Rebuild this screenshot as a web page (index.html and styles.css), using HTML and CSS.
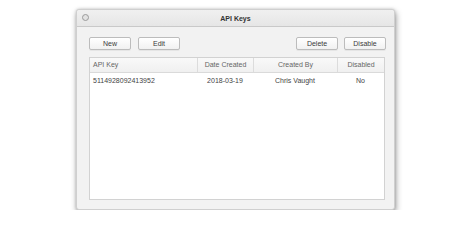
FILE: index.html
```html
<!DOCTYPE html>
<html>
<head>
<meta charset="utf-8">
<link rel="stylesheet" href="styles.css">
</head>
<body>
<div class="window">
  <div class="titlebar">
    <span class="close"></span>
    <span class="title">API Keys</span>
  </div>
  <div class="content">
    <div class="toolbar">
      <div class="group">
        <button class="btn">New</button>
        <button class="btn">Edit</button>
      </div>
      <div class="group group-right">
        <button class="btn">Delete</button>
        <button class="btn">Disable</button>
      </div>
    </div>
    <div class="table">
      <div class="row head">
        <div class="cell left">API Key</div>
        <div class="cell">Date Created</div>
        <div class="cell">Created By</div>
        <div class="cell">Disabled</div>
      </div>
      <div class="row">
        <div class="cell left">5114928092413952</div>
        <div class="cell">2018-03-19</div>
        <div class="cell">Chris Vaught</div>
        <div class="cell">No</div>
      </div>
    </div>
  </div>
</div>
</body>
</html>
```
FILE: styles.css
```css
html, body {
  margin: 0;
  padding: 0;
  background: #ffffff;
}
body {
  padding: 9px 0 0 76px;
  font-family: "Liberation Sans", Arial, sans-serif;
  font-size: 7px;
  color: #444;
}
.window {
  width: 319px;
  height: 201px;
  box-sizing: border-box;
  background: #f2f2f2;
  border: 1px solid #cfcfcf;
  border-radius: 3px;
  box-shadow: 1px 3px 6px rgba(0,0,0,0.38), 0 0 3px rgba(0,0,0,0.18);
  display: flex;
  flex-direction: column;
}
.titlebar {
  height: 16px;
  position: relative;
  display: flex;
  align-items: center;
  justify-content: center;
  background: linear-gradient(#f0f0f0, #e6e6e6);
  border-bottom: 1px solid #c9c9c9;
  border-radius: 3px 3px 0 0;
}
.close {
  position: absolute;
  left: 5px;
  top: 4px;
  width: 5px;
  height: 5px;
  border: 1px solid #9a9a9a;
  border-radius: 50%;
  background: #e2e2e2;
}
.title {
  font-weight: bold;
  color: #333;
  font-size: 7px;
}
.content {
  flex: 1;
  padding: 10px 9px 9px 12px;
  display: flex;
  flex-direction: column;
  gap: 7px;
}
.toolbar {
  display: flex;
  justify-content: space-between;
}
.group {
  display: flex;
  gap: 7px;
}
.group-right {
  gap: 6px;
  margin-right: -1px;
}
.btn {
  width: 42px;
  height: 13px;
  padding: 0;
  margin: 0;
  font-family: "Liberation Sans", Arial, sans-serif;
  font-size: 7px;
  color: #3a3a3a;
  background: linear-gradient(#ffffff, #f1f1f1);
  border: 1px solid #bcbcbc;
  border-radius: 2px;
  box-shadow: 0 1px 0 rgba(0,0,0,0.05);
}
.table {
  flex: 1;
  background: #ffffff;
  border: 1px solid #d2d2d2;
  display: flex;
  flex-direction: column;
}
.row {
  display: grid;
  grid-template-columns: 107px 56px 84px 1fr;
  height: 16px;
  align-items: center;
}
.row.head {
  height: 14px;
  background: linear-gradient(#f9f9f9, #f0f0f0);
  border-bottom: 1px solid #dadada;
  color: #666;
}
.cell {
  text-align: center;
  line-height: 14px;
}
.row.head .cell + .cell {
  border-left: 1px solid #dcdcdc;
}
.cell.left {
  text-align: left;
  padding-left: 3px;
}
```
